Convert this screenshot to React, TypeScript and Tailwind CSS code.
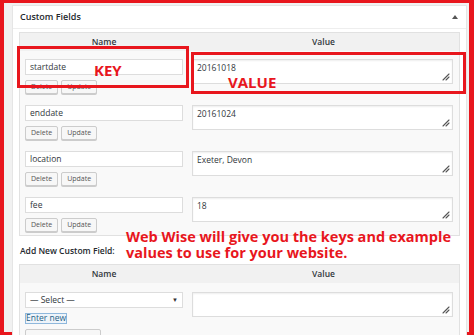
import React from 'react';

const font = { fontFamily: '"Open Sans", "Noto Sans", sans-serif' };

type Field = { key: string; value: string };

const fields: Field[] = [
  { key: 'startdate', value: '20161018' },
  { key: 'enddate', value: '20161024' },
  { key: 'location', value: 'Exeter, Devon' },
  { key: 'fee', value: '18' },
];

function Grip() {
  return (
    <svg className="absolute right-[2px] bottom-[2px]" width="9" height="9" viewBox="0 0 9 9">
      <path d="M8 2 L2 8 M8 5 L5 8" stroke="#555" strokeWidth="1.1" strokeLinecap="round" />
    </svg>
  );
}

function ValueBox({ value }: { value: string }) {
  return (
    <div className="relative h-[25px] bg-white border border-[#dddddd] shadow-[inset_0_1px_2px_rgba(0,0,0,0.07)] px-[4px] pt-[2px] text-[8.5px] leading-[12px] text-[#32373c]">
      {value}
      <Grip />
    </div>
  );
}

function SmallButton({ label }: { label: string }) {
  return (
    <span className="inline-flex items-center h-[14px] px-[5px] bg-[#f7f7f7] border border-[#cccccc] rounded-[2px] shadow-[0_1px_0_#cccccc] text-[7px] text-[#555555]">
      {label}
    </span>
  );
}

function HeaderRow() {
  return (
    <div className="grid grid-cols-[168px_1fr] h-[18px] bg-[#f1f1f1] text-[8.5px] font-semibold text-[#32373c]">
      <div className="flex items-center justify-center">Name</div>
      <div className="flex items-center justify-center">Value</div>
    </div>
  );
}

function FieldRow({ field }: { field: Field }) {
  return (
    <div className="grid grid-cols-[168px_1fr] h-[46px] pt-[8px]">
      <div className="pl-[5px]">
        <div className="h-[16px] w-[158px] bg-white border border-[#dddddd] px-[4px] flex items-center text-[8.5px] text-[#32373c]">
          {field.key}
        </div>
        <div className="flex gap-[3px] mt-[5px]">
          <SmallButton label="Delete" />
          <SmallButton label="Update" />
        </div>
      </div>
      <div className="pl-[4px] pr-[6px]">
        <ValueBox value={field.value} />
      </div>
    </div>
  );
}

export default function App() {
  return (
    <div className="relative w-[474px] h-[335px] overflow-hidden" style={font}>
      <div className="w-full h-full bg-[#f1f1f1] border-l-4 border-t-[3px] border-r-[5px] border-b-[3px] border-[#e8161d] pl-[8px] pt-[2px] pr-[2px]">
        <div className="bg-white border border-[#e5e5e5] h-[340px]">
          <div className="h-[23px] border-b border-[#eeeeee] flex items-center justify-between pl-[7px] pr-[8px]">
            <span className="text-[9px] font-semibold text-[#23282d]">Custom Fields</span>
            <span className="w-0 h-0 border-l-[3px] border-r-[3px] border-b-[4px] border-l-transparent border-r-transparent border-b-[#555555]" />
          </div>
          <div className="px-[6px] pt-[3px]">
            <div className="border border-[#e1e1e1] bg-[#f9f9f9]">
              <HeaderRow />
              {fields.map((f) => (
                <FieldRow key={f.key} field={f} />
              ))}
            </div>
            <p className="mt-[9px] text-[8.5px] leading-[12px] font-semibold text-[#23282d] pl-[1px]">
              Add New Custom Field:
            </p>
            <div className="mt-[7px] border border-[#e1e1e1] bg-[#f9f9f9] h-[80px]">
              <HeaderRow />
              <div className="grid grid-cols-[168px_1fr] pt-[9px]">
                <div className="pl-[5px]">
                  <div className="h-[16px] w-[158px] bg-white border border-[#dddddd] px-[4px] flex items-center justify-between text-[8.5px] text-[#32373c]">
                    <span>— Select —</span>
                    <span className="text-[6px] text-[#333]">▼</span>
                  </div>
                  <div className="mt-[5px] flex w-fit items-center h-[11px] border border-[#8fb8dc] bg-[#eef4fa] text-[8.5px] text-[#1e5f86] leading-none">
                    Enter new
                  </div>
                  <div className="mt-[5px] w-[76px] h-[16px] bg-[#f7f7f7] border border-[#cccccc] rounded-[2px]" />
                </div>
                <div className="pl-[4px] pr-[6px]">
                  <ValueBox value="" />
                </div>
              </div>
            </div>
          </div>
        </div>
      </div>

      <div className="absolute left-[17px] top-[46px] w-[172px] h-[42px] border-[3px] border-[#e8161d]" />
      <div className="absolute left-[191px] top-[52px] w-[275px] h-[42px] border-[3px] border-[#e8161d]" />
      <span className="absolute left-[94px] top-[60px] text-[15px] leading-[20px] font-bold text-[#e8161d]">KEY</span>
      <span className="absolute left-[228px] top-[72px] text-[15px] leading-[20px] font-bold text-[#e8161d]">VALUE</span>
      <p className="absolute left-[126px] top-[229px] whitespace-nowrap text-[14.5px] leading-[16px] font-bold text-[#e8161d]">
        Web Wise will give you the keys and example
        <br />
        values to use for your website.
      </p>
    </div>
  );
}
